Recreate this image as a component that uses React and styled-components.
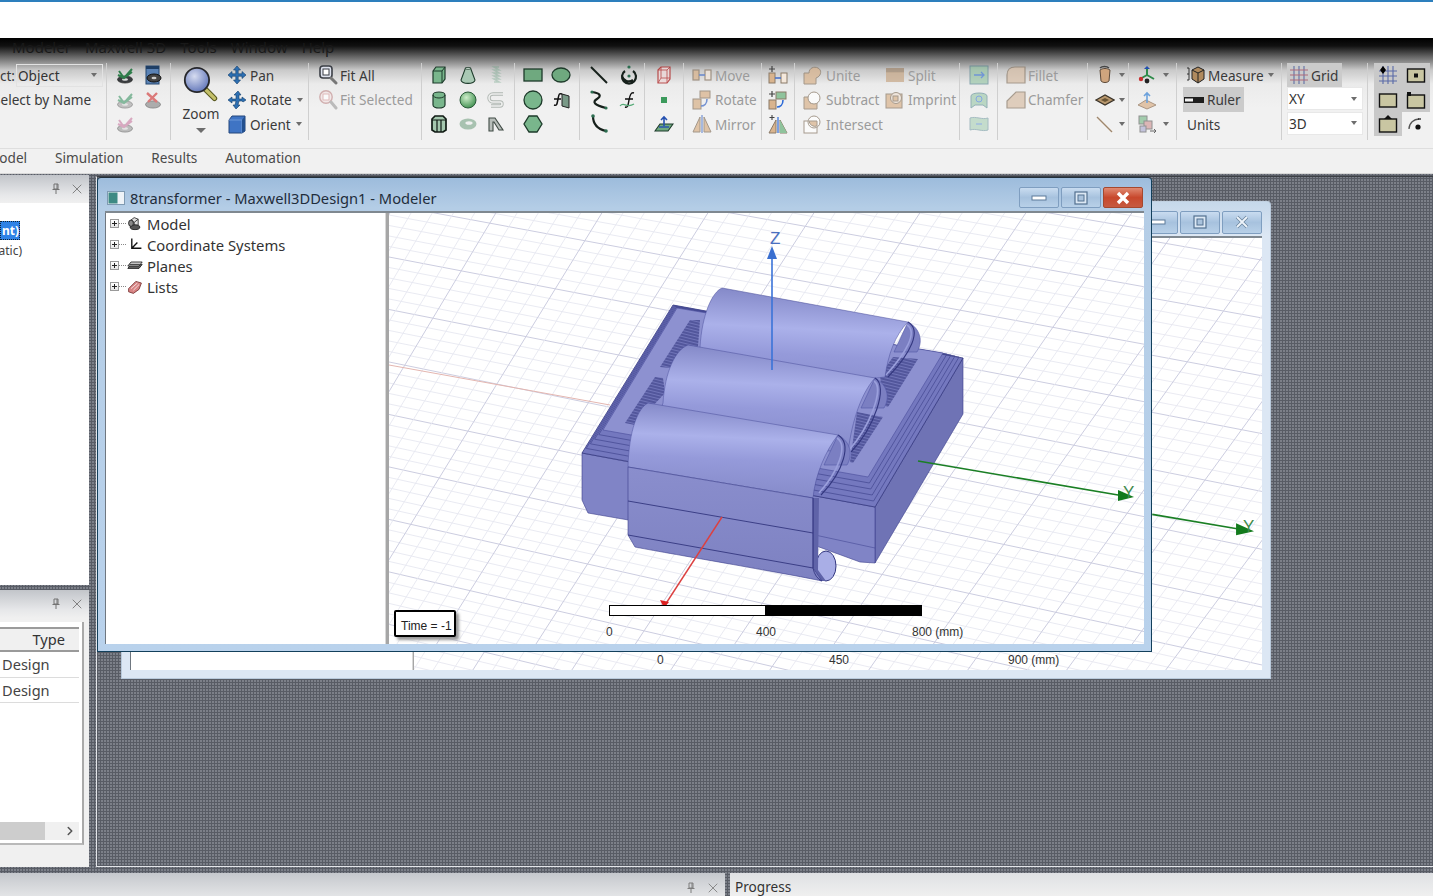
import React, { useMemo } from "react";
import styled, { createGlobalStyle, css } from "styled-components";
import { X, ChevronRight } from "lucide-react";

const GlobalStyle = createGlobalStyle`
  html, body { margin: 0; padding: 0; background: #fff; }
  body { font-family: "Noto Sans", "Liberation Sans", sans-serif; color: #333; }
  * { box-sizing: border-box; }
`;

const dither = css`
  background-color: #7c8089;
  background-image: radial-gradient(#585c65 48%, transparent 52%);
  background-size: 3px 3px;
`;

const Page = styled.div`
  width: 1433px;
  height: 896px;
  display: flex;
  flex-direction: column;
  overflow: hidden;
`;

const TopStrip = styled.div`
  height: 38px;
  flex: none;
  background: #fff;
  border-top: 2px solid #2d7fbd;
`;

const Ribbon = styled.div`
  height: 111px;
  flex: none;
  background: linear-gradient(#000 0, #111 8px, #6f6f6f 20px, #c9c9c9 32px, #ebebeb 46px, #f1f1f1 70px);
  border-bottom: 1px solid #dedede;
`;

const MenuBar = styled.div`
  height: 24.75px;
  display: flex;
  gap: 14px;
  padding: 0 0 0 12px;
  font-size: 15px;
  line-height: 18px;
  color: #191919;
`;

const Band = styled.div`
  display: flex;
  height: 80px;
  overflow: hidden;
`;

const Group = styled.div`
  flex: none;
  width: ${(p) => p.$w}px;
  height: 77px;
  padding-left: ${(p) => p.$pl || 0}px;
  border-right: ${(p) => (p.$end ? "none" : "1px solid #cfcfcf")};
  display: grid;
  grid-auto-flow: column;
  grid-template-rows: repeat(3, 24.5px);
  grid-template-columns: ${(p) => p.$cols || "1fr"};
`;

const Cell = styled.div`
  display: flex;
  align-items: center;
  justify-content: center;
  background: ${(p) => (p.$on ? "#c9c9c9" : "transparent")};
`;

const Item = styled.div`
  display: flex;
  align-items: center;
  gap: ${(p) => p.$gap ?? 3}px;
  font-size: 13.6px;
  white-space: nowrap;
  color: ${(p) => (p.$off ? "#9b9b9b" : "#3a3a3a")};
  margin-left: ${(p) => p.$ml || 0}px;
  margin-right: ${(p) => p.$mr || 0}px;
  padding: 0 ${(p) => p.$pad || 0}px;
  background: ${(p) => (p.$on ? "#cbcbcb" : "transparent")};
`;

const ClipRow = styled.div`
  display: flex;
  align-items: center;
  justify-content: flex-end;
  font-size: 13.6px;
  color: #3a3a3a;
  padding-right: 3px;
  gap: 1px;
  white-space: nowrap;
`;

const Combo = styled.div`
  width: ${(p) => p.$w}px;
  height: 23px;
  flex: none;
  display: flex;
  align-items: center;
  justify-content: space-between;
  padding: 0 3px 0 1px;
  font-size: 13.6px;
  color: #333;
  background: ${(p) => p.$bg || "#fff"};
  border: 1px solid ${(p) => p.$line || "#e8e8e8"};
`;

const Caret = styled.span`
  flex: none;
  width: 0;
  height: 0;
  margin: 0 ${(p) => p.$m ?? 2}px;
  border-left: ${(p) => p.$big || 3.5}px solid transparent;
  border-right: ${(p) => p.$big || 3.5}px solid transparent;
  border-top: ${(p) => (p.$big ? 5 : 4)}px solid #6d6d6d;
`;

const ZoomCol = styled.div`
  grid-row: 1 / span 3;
  display: flex;
  flex-direction: column;
  align-items: center;
  font-size: 13.6px;
  color: #3a3a3a;
  padding-top: 3px;
`;

const ZoomLabel = styled.div`
  line-height: 18px;
  margin: 3px 0 5px;
`;

const TabBar = styled.div`
  height: 24px;
  flex: none;
  background: #f1f1f1;
  display: flex;
  gap: 28px;
  margin-left: -13px;
  font-size: 13.6px;
  line-height: 18px;
  color: #4a4a4a;
`;

const Workspace = styled.div`
  ${dither}
  height: 700px;
  flex: none;
  display: flex;
  border-top: 1px solid #d8d8d8;
`;

const LeftCol = styled.div`
  width: 89px;
  flex: none;
  display: flex;
  flex-direction: column;
  gap: 5px;
  padding-top: 1px;
  height: 695px;
`;

const Pane = styled.div`
  display: flex;
  flex-direction: column;
  height: ${(p) => p.$h}px;
  flex: none;
  background: ${(p) => p.$bg};
`;

const PaneHead = styled.div`
  height: ${(p) => p.$h}px;
  flex: none;
  display: flex;
  align-items: center;
  justify-content: flex-end;
  gap: 7px;
  padding-right: 4px;
  color: #737373;
  background: linear-gradient(#c2c5ca, #e6e7e9 70%, #f0f0f0);
`;

const TreeClip = styled.div`
  padding-top: 18px;
  display: flex;
  flex-direction: column;
  gap: 1px;
  font-size: 12px;
  line-height: 18px;
`;

const SelLabel = styled.div`
  width: 20px;
  height: 19px;
  display: flex;
  justify-content: flex-end;
  align-items: center;
  background: #2f82e6;
  border: 1px dotted #123;
  color: #fff;
  font-weight: 700;
`;

const ClipText = styled.div`
  width: 22px;
  display: flex;
  justify-content: flex-end;
  white-space: nowrap;
  color: #444;
  margin-top: 1px;
`;

const ListBox = styled.div`
  margin: 4px 5px 0 0;
  height: 223px;
  background: #fff;
  border-right: 2px solid #a9a9a9;
  border-bottom: 2px solid #b9b9b9;
  padding: 5px 3px 0 0;
  display: flex;
  flex-direction: column;
  font-size: 14.6px;
  color: #444;
`;

const TypeHead = styled.div`
  height: 25px;
  flex: none;
  background: #f0f0f0;
  border-top: 2px solid #9a9a9a;
  border-bottom: 2px solid #9a9a9a;
  text-align: right;
  padding-right: 14px;
  line-height: 21px;
  color: #333;
`;

const TypeRow = styled.div`
  height: 25.5px;
  flex: none;
  border-bottom: 1px solid #dcdcdc;
  padding-left: 2px;
  line-height: 24px;
`;

const HScroll = styled.div`
  margin-top: auto;
  margin-bottom: 3px;
  height: 18px;
  flex: none;
  display: flex;
  justify-content: flex-end;
  align-items: center;
  color: #555;
  background: linear-gradient(to right, #cdcdcd 45px, #f0f0f0 45px);
  padding-right: 2px;
`;

const Mdi = styled.div`
  flex: 1;
  position: relative;
  margin: 2px 0 6px 7px;
  height: 691px;
  border-top: 1px solid #3c3f45;
  border-left: 1px solid #e4e6ea;
  border-bottom: 1px solid #e4e6ea;
  overflow: hidden;
`;

const Win = styled.div`
  position: absolute;
  left: ${(p) => p.$x}px;
  top: ${(p) => p.$y}px;
  width: ${(p) => p.$w}px;
  height: ${(p) => p.$h}px;
  display: flex;
  flex-direction: column;
  padding: 0 ${(p) => p.$pad}px ${(p) => p.$pad}px;
  border-radius: 4px 4px 0 0;
  background: ${(p) =>
    p.$active
      ? "linear-gradient(#9dbcdc 0, #b4cde6 30px, #b9d2ec 100%)"
      : "linear-gradient(#c6d8ea 0, #dce7f4 34px, #dce7f4 100%)"};
  border: 1px solid ${(p) => (p.$active ? "#13405c" : "#b9cadc")};
  border-top-color: ${(p) => (p.$active ? "#22303c" : "#c2d2e2")};
`;

const TitleBar = styled.div`
  height: ${(p) => p.$h}px;
  flex: none;
  display: flex;
  align-items: center;
  margin: 0 -6px 0 ${(p) => p.$ml || 0}px;
  padding-top: 6px;
`;

const TitleText = styled.div`
  flex: 1;
  margin-left: 5px;
  font-size: 14.7px;
  color: #1f2d3b;
  white-space: nowrap;
`;

const WinButtons = styled.div`
  display: flex;
  gap: 2px;
  padding-right: ${(p) => p.$pr}px;
`;

const WinBtn = styled.div`
  width: 40px;
  height: ${(p) => p.$h || 21}px;
  display: flex;
  align-items: center;
  justify-content: center;
  border-radius: 2px;
  border: 1px solid ${(p) => (p.$close ? "#a5482e" : "#7f9ec0")};
  background: ${(p) =>
    p.$close
      ? "linear-gradient(#e08a72, #c8482c 50%, #c65a40)"
      : "linear-gradient(#c9dcf0, #a7c2de 50%, #b8d0e8)"};
`;

const WinBody = styled.div`
  flex: 1;
  min-height: 0;
  display: flex;
  background: #fff;
  border-top: 2px solid #7f8890;
`;

const TreePane = styled.div`
  width: ${(p) => p.$w}px;
  flex: none;
  border-left: 1px solid #6f7780;
  padding: 0 0 0 4px;
  display: flex;
  flex-direction: column;
  font-size: 14.8px;
  color: #333;
`;

const TreeRow = styled.div`
  height: 21px;
  display: flex;
  align-items: center;
  white-space: nowrap;
`;

const Expander = styled.span`
  width: 9px;
  height: 9px;
  flex: none;
  position: relative;
  border: 1px solid #9a9a9a;
  background: linear-gradient(to bottom, #fff, #e6e6e6);
  &::before {
    content: "";
    position: absolute;
    left: 1px;
    top: 3px;
    width: 5px;
    height: 1px;
    background: #222;
  }
  &::after {
    content: "";
    position: absolute;
    left: 3px;
    top: 1px;
    width: 1px;
    height: 5px;
    background: #222;
  }
`;

const Dots = styled.span`
  width: 7px;
  flex: none;
  border-top: 1px dotted #888;
  margin-right: 1px;
`;

const TreeLabel = styled.span`
  margin-left: 4px;
`;

const SplitBar = styled.div`
  width: ${(p) => p.$w}px;
  flex: none;
  background: #a6a6a6;
  border-left: 1px solid #d8d8d8;
`;

const Viewport = styled.div`
  flex: 1;
  position: relative;
  min-width: 0;
  background: #fff;
`;

const Scene = styled.svg`
  position: absolute;
  inset: 0;
  width: 100%;
  height: 100%;
  display: block;
`;

const TimeBox = styled.div`
  position: absolute;
  left: 5px;
  bottom: 7px;
  width: 62px;
  height: 27px;
  background: #fff;
  border: 2px solid #000;
  border-radius: 2px;
  box-shadow: 3px 3px 3px #999;
  font-family: "Liberation Sans", sans-serif;
  font-size: 12px;
  line-height: 29px;
  padding-left: 5px;
  color: #222;
  white-space: nowrap;
`;

const ScaleBar = styled.div`
  position: absolute;
  left: 220px;
  top: 392px;
  width: 313px;
  height: 11px;
  display: flex;
  border: 1px solid #000;
  background: linear-gradient(to right, #fff 50%, #000 50%);
`;

const ScaleTick = styled.div`
  position: absolute;
  left: ${(p) => p.$x}px;
  top: ${(p) => p.$y}px;
  font-family: "Liberation Sans", sans-serif;
  font-size: 12px;
  line-height: 13px;
  color: #333;
  white-space: nowrap;
`;

const BottomRow = styled.div`
  ${dither}
  flex: 1;
  display: flex;
  gap: 5px;
`;

const DockLeft = styled.div`
  width: 725px;
  flex: none;
  display: flex;
  justify-content: flex-end;
  align-items: center;
  gap: 8px;
  padding: 6px 4px 0 0;
  color: #7d7d7d;
  background: linear-gradient(#c5c8cd, #e4e5e7);
`;

const DockRight = styled.div`
  flex: 1;
  padding: 4px 0 0 5px;
  font-size: 13.6px;
  line-height: 20px;
  color: #333;
  background: linear-gradient(#dfe1e4, #f0f0f0);
`;

const Svg = styled.svg`
  width: ${(p) => p.$s || 20}px;
  height: ${(p) => p.$s || 20}px;
  flex: none;
  display: block;
  opacity: ${(p) => p.$o ?? 1};
`;

const Ico = ({ s, o, children }) => (
  <Svg viewBox="0 0 20 20" $s={s} $o={o}>
    {children}
  </Svg>
);

const G = "#79b68c";
const D = "#1d3a2a";
const T = "#d9b48e";
const TD = "#8a7a68";

const Pin = () => (
  <Svg viewBox="0 0 12 12" $s={12}>
    <path d="M4 1h4v5H4zM2.5 6.5h7M6 6.5V11M7 1v5" fill="none" stroke="currentColor" strokeWidth="1" />
  </Svg>
);

const Bowl = ({ c = "#3a3d40" }) => <ellipse cx="10" cy="14.5" rx="7.5" ry="3.6" fill={c} stroke="#222" strokeWidth=".6" />;

const CheckEye = ({ c, o }) => (
  <Ico o={o}>
    <Bowl c={o < 1 ? "#9a9a9a" : "#3a3d40"} />
    <ellipse cx="10" cy="14.5" rx="3" ry="1.3" fill="#ddd" />
    <path d="M4 6l5 7 8-9M3 10l6 3 8-6" fill="none" stroke={c} strokeWidth="2" />
  </Ico>
);

const I = {
  docEye: (
    <Ico>
      <rect x="3" y="1" width="13" height="18" fill="#5a82b5" stroke="#24476f" />
      <rect x="3" y="1" width="13" height="3" fill="#1f3f66" />
      <ellipse cx="11" cy="13" rx="7" ry="4" fill="#444" stroke="#111" />
      <ellipse cx="11" cy="13" rx="2.5" ry="1.3" fill="#ccc" />
    </Ico>
  ),
  redEye: (
    <Ico o={0.65}>
      <Bowl c="#888" />
      <path d="M4 3l10 9M14 3L5 12" stroke="#d23c3c" strokeWidth="2.4" />
    </Ico>
  ),
  lens: (
    <Svg viewBox="0 0 40 40" $s={36}>
      <defs>
        <radialGradient id="lensG" cx=".4" cy=".35" r=".7">
          <stop offset="0" stopColor="#d6dcf0" />
          <stop offset="1" stopColor="#5f74b8" />
        </radialGradient>
      </defs>
      <path d="M24 25l11 11" stroke="#5a5a20" strokeWidth="6" strokeLinecap="round" />
      <path d="M24 25l11 11" stroke="#c4c06a" strokeWidth="3.6" strokeLinecap="round" />
      <circle cx="15.5" cy="15.5" r="13.5" fill="url(#lensG)" stroke="#26272b" strokeWidth="2" />
    </Svg>
  ),
  pan: (
    <Ico>
      <path d="M10 1l3.5 4H11.2v3.8H15V6.5l4 3.5-4 3.5v-2.3h-3.8V15h2.3L10 19l-3.5-4h2.3v-3.8H5v2.3L1 10l4-3.5v2.3h3.8V5H6.5z" fill="#2d6fb2" stroke="#123d6a" strokeWidth=".6" />
    </Ico>
  ),
  rotate: (
    <Ico>
      <path d="M1 10l4-3v2h4V5H7l4-4 3 4h-2v4h3V7l4 3-3 2-1-1h-3l-1 4h2l-4 4-3-4h2l1-4H5v2z" fill="#2d6fb2" stroke="#123d6a" strokeWidth=".6" />
    </Ico>
  ),
  cube: (
    <Ico>
      <path d="M2 6l3-4h13v15l-3 2H2z" fill="#3f74c4" stroke="#25467a" />
      <path d="M2 6h13v13" fill="none" stroke="#6d98d8" />
      <path d="M15 6l3-4v15l-3 2z" fill="#23508f" />
    </Ico>
  ),
  fitAll: (
    <Ico>
      <rect x="2" y="1" width="12" height="12" rx="3" fill="#dfe3ee" stroke="#3b3f46" strokeWidth="1.6" />
      <rect x="5" y="4" width="6" height="6" fill="#fff" stroke="#3b3f46" />
      <path d="M13 13l5 5" stroke="#777" strokeWidth="3" strokeLinecap="round" />
    </Ico>
  ),
  fitSel: (
    <Ico o={0.75}>
      <circle cx="8" cy="7" r="6.2" fill="#f3e6e6" stroke="#c79a9a" strokeWidth="1.4" />
      <rect x="5" y="4" width="6" height="6" fill="#fff" stroke="#dba9a9" />
      <path d="M13 12l5 6" stroke="#aaa" strokeWidth="3" strokeLinecap="round" />
    </Ico>
  ),
  box: (
    <Ico>
      <path d="M4 6l3-4h9v12l-3 4H4z" fill={G} stroke={D} strokeWidth="1.2" />
      <path d="M4 6h9v12M13 6l3-4" fill="none" stroke={D} />
    </Ico>
  ),
  cone: (
    <Ico>
      <path d="M7.5 3h5l4.5 12a7 3.4 0 0 1-14 0z" fill="#a9c9b4" stroke={D} strokeWidth="1.1" />
      <ellipse cx="10" cy="3.4" rx="2.5" ry="1" fill="#cfe0d5" stroke={D} strokeWidth=".7" />
    </Ico>
  ),
  helix: (
    <Ico o={0.32}>
      <path d="M13 2H8l5 3H8l5 3H8l5 3H8l5 3H8l5 3H8" fill="none" stroke="#5c9a78" strokeWidth="1.5" />
    </Ico>
  ),
  cyl: (
    <Ico>
      <path d="M4 5a6 3 0 0 1 12 0v10a6 3 0 0 1-12 0z" fill={G} stroke={D} strokeWidth="1.2" />
      <path d="M4 5a6 3 0 0 0 12 0" fill="none" stroke={D} />
    </Ico>
  ),
  sphere: (
    <Ico>
      <defs>
        <radialGradient id="sphG" cx=".4" cy=".35" r=".7">
          <stop offset="0" stopColor="#cfeecb" />
          <stop offset="1" stopColor="#3e8f4e" />
        </radialGradient>
      </defs>
      <circle cx="10" cy="10" r="8" fill="url(#sphG)" stroke="#2b5a3a" />
    </Ico>
  ),
  hook: (
    <Ico o={0.55}>
      <path d="M17 4H7a4 4 0 0 0 0 8h7a2 2 0 0 1 0 4H5" fill="none" stroke="#7e8a82" strokeWidth="3.4" />
      <path d="M17 4H7a4 4 0 0 0 0 8h7a2 2 0 0 1 0 4H5" fill="none" stroke="#eef0ee" strokeWidth="1.6" />
    </Ico>
  ),
  poly: (
    <Ico>
      <path d="M3 5l3-3h8l3 3v11l-3 2H6l-3-2z" fill="#a5c8af" stroke="#101a14" strokeWidth="1.7" />
      <path d="M3 6h14M8 6v12M12 6v12" fill="none" stroke="#101a14" strokeWidth="1.2" />
    </Ico>
  ),
  torus: (
    <Ico>
      <ellipse cx="10" cy="10" rx="8.5" ry="5.5" fill="#a8c2b0" />
      <ellipse cx="11" cy="9" rx="3.6" ry="1.8" fill="#f0f0f0" />
    </Ico>
  ),
  bond: (
    <Ico>
      <path d="M3 17V4h6l8 12h-4L8 8H7v9z" fill="#b8beba" stroke="#3f4a44" strokeWidth="1.1" />
    </Ico>
  ),
  rect: (
    <Ico>
      <rect x="1" y="4" width="18" height="12" fill="#6fa97f" stroke={D} strokeWidth="1.3" />
    </Ico>
  ),
  ellipse: (
    <Ico>
      <ellipse cx="10" cy="10" rx="9" ry="7" fill="#6fa97f" stroke={D} strokeWidth="1.3" />
    </Ico>
  ),
  circle: (
    <Ico>
      <circle cx="10" cy="10" r="9" fill={G} stroke={D} strokeWidth="1.3" />
    </Ico>
  ),
  eqSurf: (
    <Ico>
      <path d="M11 4l7 2v12l-7-2z" fill="#7a9a88" stroke="#222" />
      <path d="M3 15c3 1 3-1 4-6s1-6 4-5M3 9h7" fill="none" stroke="#111" strokeWidth="1.5" />
    </Ico>
  ),
  hex: (
    <Ico>
      <path d="M6 2h8l5 8-5 8H6l-5-8z" fill={G} stroke={D} strokeWidth="1.3" />
    </Ico>
  ),
  line: (
    <Ico>
      <path d="M2 2l16 16" stroke="#16201b" strokeWidth="2" />
    </Ico>
  ),
  arcC: (
    <Ico>
      <path d="M15 6a7 7 0 1 1-8 0M4 11a7 7 0 0 0 11 4" fill="none" stroke="#16201b" strokeWidth="2.2" />
      <circle cx="11" cy="2" r="1.6" fill="#2c6d50" />
      <circle cx="11" cy="11" r="1.6" fill="#2c6d50" />
    </Ico>
  ),
  spline: (
    <Ico>
      <path d="M3 2c8 1 10 4 5 7s-3 6 9 9" fill="none" stroke="#16201b" strokeWidth="2.2" />
      <circle cx="3" cy="2" r="1.6" fill="#2c6d50" />
      <circle cx="17" cy="18" r="1.6" fill="#2c6d50" />
    </Ico>
  ),
  eqCurve: (
    <Ico>
      <path d="M7 17c3 1 3-2 4-7s2-8 5-7M7 9h8" fill="none" stroke="#111" strokeWidth="1.4" />
      <path d="M2 16c4-5 6 3 14-2" fill="none" stroke="#5a7" strokeWidth="1.2" />
    </Ico>
  ),
  arc: (
    <Ico>
      <path d="M4 2c0 8 4 13 13 15" fill="none" stroke="#16201b" strokeWidth="2.2" />
      <circle cx="4" cy="2" r="1.8" fill="#2c6d50" />
      <circle cx="17" cy="17" r="1.8" fill="#2c6d50" />
    </Ico>
  ),
  redBox: (
    <Ico o={0.8}>
      <path d="M4 5l3-3h9v12l-3 4H4z" fill="#eed9d9" stroke="#b02a2a" strokeWidth="1.2" />
      <path d="M4 5h9v13M13 5l3-3M7 2v11h9M7 13l-3 5" fill="none" stroke="#b02a2a" strokeWidth=".8" />
    </Ico>
  ),
  point: (
    <Ico>
      <rect x="7" y="7" width="6" height="6" fill="#3c9a5c" />
    </Ico>
  ),
  plane: (
    <Ico>
      <path d="M1 17l5-7h13l-5 7z" fill="#6fa97f" stroke={D} strokeWidth="1.1" />
      <path d="M10 12V3M7 6l3-3 3 3" fill="none" stroke="#2450b0" strokeWidth="1.6" />
      <path d="M5 13h10" stroke="#2450b0" strokeWidth="1.4" />
    </Ico>
  ),
  move: (
    <Ico o={0.75}>
      <rect x="1" y="5" width="6" height="10" fill={T} stroke={TD} strokeWidth="1.2" />
      <rect x="13" y="5" width="6" height="10" fill="#f4e8dc" stroke={TD} strokeWidth="1.2" />
      <path d="M7 10h6" stroke="#4c74c8" strokeWidth="1.6" />
    </Ico>
  ),
  rotOp: (
    <Ico o={0.75}>
      <rect x="1" y="9" width="8" height="10" fill={T} stroke={TD} />
      <rect x="8" y="1" width="10" height="7" fill={T} stroke={TD} />
      <path d="M15 9c0 5-3 7-6 7" fill="none" stroke="#4c74c8" strokeWidth="1.6" />
    </Ico>
  ),
  mirror: (
    <Ico o={0.75}>
      <path d="M8 3v15H1zM12 3v15h7z" fill={T} stroke={TD} />
      <path d="M10 1v18" stroke="#4c74c8" strokeWidth="1.2" />
    </Ico>
  ),
  plusMove: (
    <Ico>
      <rect x="1" y="8" width="6" height="10" fill={T} stroke={TD} />
      <rect x="13" y="8" width="6" height="10" fill="#f4e8dc" stroke={TD} />
      <path d="M7 13h6" stroke="#4c74c8" strokeWidth="1.6" />
      <path d="M4 1v6M1 4h6" stroke="#444" strokeWidth="1.2" />
    </Ico>
  ),
  plusRot: (
    <Ico>
      <rect x="1" y="10" width="7" height="9" fill={T} stroke={TD} />
      <rect x="8" y="2" width="10" height="7" fill="#8fc39c" stroke={TD} />
      <path d="M15 10c0 5-3 7-6 7" fill="none" stroke="#2e6bd8" strokeWidth="1.6" />
      <path d="M4 1v6M1 4h6" stroke="#444" strokeWidth="1.2" />
    </Ico>
  ),
  plusMirror: (
    <Ico>
      <path d="M8 6v13H1zM12 6v13h7z" fill={T} stroke={TD} />
      <path d="M12 6v13h7z" fill="#8fc39c" />
      <path d="M10 3v16" stroke="#2e6bd8" strokeWidth="1.2" />
      <path d="M4 1v5M1.5 3.5h5" stroke="#444" strokeWidth="1.1" />
    </Ico>
  ),
  unite: (
    <Ico o={0.72}>
      <path d="M1 8h5c0-5 5-7 9-5s3 7 0 9l-2 1v6H1z" fill={T} stroke={TD} />
    </Ico>
  ),
  subtract: (
    <Ico o={0.72}>
      <path d="M1 7h6v6h7v6H1z" fill={T} stroke={TD} />
      <circle cx="11" cy="8" r="6" fill="#fff" stroke={TD} />
    </Ico>
  ),
  intersect: (
    <Ico o={0.72}>
      <rect x="1" y="7" width="13" height="12" fill="#fff" stroke={TD} />
      <circle cx="11" cy="8" r="6" fill="#fff" stroke={TD} />
      <path d="M6 7h8v5a6 6 0 0 1-8-5z" fill={T} stroke={TD} />
    </Ico>
  ),
  split: (
    <Ico o={0.72}>
      <rect x="1" y="3" width="18" height="14" fill="#a0886f" />
      <path d="M1 8h18" stroke="#d9b48e" />
      <rect x="1" y="8" width="18" height="9" fill="#c8a989" />
    </Ico>
  ),
  imprint: (
    <Ico o={0.72}>
      <rect x="1" y="4" width="16" height="14" fill={T} stroke={TD} />
      <circle cx="11" cy="8" r="5.5" fill="#f1e3d6" stroke={TD} />
      <rect x="8" y="6" width="5" height="5" fill={T} stroke={TD} />
    </Ico>
  ),
  sweep: (
    <Ico o={0.6}>
      <rect x="1" y="1" width="18" height="18" fill="#8fc3a0" stroke="#4a7d8a" />
      <path d="M5 10h10M12 7l3 3-3 3" fill="none" stroke="#2e6bd8" strokeWidth="1.3" />
    </Ico>
  ),
  thicken: (
    <Ico o={0.55}>
      <path d="M2 18V6c0-4 16-4 16 0v12l-4-3H6z" fill="#8fc3a0" stroke="#4a7d8a" />
      <circle cx="10" cy="9" r="3" fill="none" stroke="#2e6bd8" />
    </Ico>
  ),
  wrap: (
    <Ico o={0.45}>
      <path d="M1 4c6-2 12 2 18 0v12c-6 2-12-2-18 0z" fill="#8fc3a0" stroke="#4a7d8a" />
      <path d="M7 10h6" stroke="#2e6bd8" strokeWidth="1.2" />
    </Ico>
  ),
  fillet: (
    <Ico o={0.7}>
      <path d="M1 18V10c0-5 3-8 8-8h10v16z" fill="#d8bfa7" stroke={TD} strokeWidth="1.2" />
    </Ico>
  ),
  chamfer: (
    <Ico o={0.7}>
      <path d="M1 18V11L10 2h9v16z" fill="#d8bfa7" stroke={TD} strokeWidth="1.2" />
    </Ico>
  ),
  barrel: (
    <Ico>
      <path d="M5 5c3-2 7-2 10 0l-1 11c-2 2-6 2-8 0z" fill="#cfa57e" stroke="#5c4a3a" />
      <path d="M5 3c2-2 7-2 9 0" fill="none" stroke="#444" strokeWidth="1.3" />
    </Ico>
  ),
  disk: (
    <Ico>
      <path d="M1 10l9-5 9 5-9 5z" fill="#b9986e" stroke="#3a3328" strokeWidth="1.2" />
      <path d="M6 10l4-2 4 2-4 2z" fill="#6a5433" />
    </Ico>
  ),
  slash: (
    <Ico>
      <path d="M2 3l15 15" stroke="#b89a7a" strokeWidth="1.6" />
      <path d="M2 3l15 15" stroke="#6a6a6a" strokeWidth=".4" />
    </Ico>
  ),
  axes: (
    <Ico>
      <path d="M10 10V3M10 10l-7 4M10 10l7 4" stroke="#2e8b4a" strokeWidth="2" />
      <path d="M7 4l3-3 3 3" fill="#2450b0" />
      <circle cx="4" cy="14" r="2.2" fill="#c83030" />
      <circle cx="10" cy="16" r="2.4" fill="#222" />
    </Ico>
  ),
  lift: (
    <Ico o={0.8}>
      <path d="M1 15l8-5 10 5-9 4z" fill="#ddb896" stroke="#9a8068" />
      <path d="M10 13V3M7 6l3-3 3 3" fill="none" stroke="#4c8fd8" strokeWidth="1.6" />
    </Ico>
  ),
  blocks: (
    <Ico o={0.8}>
      <rect x="2" y="2" width="8" height="8" fill="#8fc39c" stroke="#7a7a7a" />
      <rect x="7" y="7" width="8" height="8" fill="#d8a8a8" stroke="#7a7a7a" />
      <rect x="3" y="12" width="6" height="6" fill="#b8b8d8" stroke="#7a7a7a" />
      <path d="M13 17h6M17 15l2 2-2 2" stroke="#444" fill="none" />
    </Ico>
  ),
  measure: (
    <Ico>
      <path d="M6 5l6-3 6 3v9l-6 4-6-4z" fill="#b08a5e" stroke="#222" />
      <path d="M6 5l6 3 6-3M12 8v10" fill="none" stroke="#222" />
      <path d="M3 3v12M1 3h2M1 9h2M1 15h2" stroke="#222" strokeWidth=".9" />
    </Ico>
  ),
  ruler: (
    <Svg viewBox="0 0 20 10" $s={20}>
      <rect x="0" y="2" width="20" height="6" fill="#1d1d1d" />
      <rect x="1" y="3.5" width="8" height="3" fill="#f0f0f0" />
    </Svg>
  ),
  grid: (
    <Ico>
      <path d="M5 1v18M10 1v18M15 1v18" stroke="#6a78a8" strokeWidth="1.2" />
      <path d="M1 5h18M1 10h18M1 15h18" stroke="#b06a7a" strokeWidth="1.2" />
    </Ico>
  ),
  snapGrid: (
    <Ico>
      <path d="M5 1v18M10 1v18M15 1v18M1 6h18M1 11h18M1 16h18" stroke="#5a6aa8" strokeWidth="1.1" />
      <path d="M5 1l3 4-3 4-3-4z" fill="#000" />
    </Ico>
  ),
  snapCenter: (
    <Ico>
      <rect x="1.5" y="4" width="17" height="13" fill="#c9c6a2" stroke="#111" strokeWidth="1.4" />
      <rect x="8" y="8.5" width="4" height="4" fill="#111" />
    </Ico>
  ),
  snapEdge: (
    <Ico>
      <rect x="1.5" y="4" width="17" height="13" fill="#c9c6a2" stroke="#111" strokeWidth="1.4" />
    </Ico>
  ),
  snapCorner: (
    <Ico>
      <rect x="1.5" y="5" width="17" height="13" fill="#c9c6a2" stroke="#111" strokeWidth="1.4" />
      <rect x="1" y="2" width="4" height="4" fill="#111" />
    </Ico>
  ),
  snapMid: (
    <Ico>
      <rect x="1.5" y="5" width="17" height="13" fill="#c9c6a2" stroke="#111" strokeWidth="1.4" />
      <path d="M10 1l4 4h-8z" fill="#111" />
    </Ico>
  ),
  snapArc: (
    <Ico>
      <path d="M3 15c0-6 5-10 10-10" fill="none" stroke="#555" strokeWidth="1.3" />
      <circle cx="12" cy="13" r="2.6" fill="#111" />
      <path d="M12 5l3 0" stroke="#111" strokeWidth="1.2" />
    </Ico>
  ),
  winIcon: (
    <Svg viewBox="0 0 18 14" $s={18}>
      <rect x=".5" y=".5" width="17" height="13" fill="#eef3f8" stroke="#7f9ab2" />
      <rect x="1.5" y="1.5" width="9" height="11" fill="#3d8a84" />
    </Svg>
  ),
  model: (
    <Ico s={16}>
      <path d="M5 5l4-3 5 2v7l-5 4-4-3z" fill="#ddd" stroke="#222" />
      <path d="M5 5l4 3 5-4M9 8v7" fill="none" stroke="#222" />
      <ellipse cx="10" cy="14" rx="6" ry="3" fill="#555" stroke="#111" />
      <ellipse cx="5" cy="9" rx="3" ry="4" fill="#888" stroke="#111" />
    </Ico>
  ),
  coord: (
    <Ico s={16}>
      <path d="M6 2v12h12M6 14l7-7" fill="none" stroke="#111" strokeWidth="1.7" />
    </Ico>
  ),
  planes: (
    <Ico s={16}>
      <path d="M1 13l4-5h14l-4 5z" fill="#666" stroke="#111" />
      <path d="M1 10l4-5h14l-4 5z" fill="#d8d8d8" stroke="#111" />
      <path d="M3 8h13" stroke="#111" />
    </Ico>
  ),
  lists: (
    <Ico s={16}>
      <path d="M2 12l9-9 7 2-3 8-7 5-6-2z" fill="#d88484" stroke="#6e2a2a" />
      <path d="M5 12l8-7M8 14l7-7" stroke="#fff" strokeWidth=".9" />
    </Ico>
  ),
};

const gridLines = (x0, y0, w, h, ox, oy) => {
  const out = [];
  for (let i = -50; i < 70; i++) {
    const Y = oy + i * 11;
    const s = 0.2 + (Y - 400) * 0.00012;
    out.push({ key: "a" + i, major: i % 5 === 0, x1: x0, y1: Y + s * (x0 - ox), x2: x0 + w, y2: Y + s * (x0 + w - ox) });
  }
  for (let i = -60; i < 80; i++) {
    const X = ox + i * 20.5;
    const s = -0.66 - (X - 770) * 0.00015;
    out.push({ key: "b" + i, major: i % 5 === 0, x1: X + s * (y0 - oy), y1: y0, x2: X + s * (y0 + h - oy), y2: y0 + h });
  }
  return out;
};

const PlaneGrid = ({ x, y, w, h, ox, oy }) => {
  const lines = useMemo(() => gridLines(x, y, w, h, ox, oy), [x, y, w, h, ox, oy]);
  return lines.map(({ key, major, ...l }) => (
    <line key={key} {...l} stroke={major ? "#cccde0" : "#e7e8f0"} strokeWidth={major ? 1 : 0.9} />
  ));
};

const lerpPoly = (a, b, t) =>
  a.map((p, i) => [p[0] + (b[i][0] - p[0]) * t, p[1] + (b[i][1] - p[1]) * t].join(",")).join(" ");

const OUTER = [[582, 453], [875, 507], [963, 358], [673, 305]];
const INNER = [[603, 430], [868, 477], [943, 353], [677, 308]];

// open end of a coil: the arch of the winding and its dark inside
const CoilEnd = ({ tx, ty, bx, by }) => (
  <g>
    <path
      d={`M${tx},${ty}C${tx + 13},${ty + 7} ${tx + 15},${ty + 20} ${tx + 9},${ty + 30}L${tx - 14},${ty + 30}z`}
      fill="#7b7fc2"
      stroke="#5357a6"
      strokeWidth=".6"
    />
    <path
      d={`M${tx},${ty}C${tx + 14},${ty + 8} ${bx + 26},${by - 24} ${bx + 3},${by}`}
      fill="none"
      stroke="#33377f"
      strokeWidth="1.1"
    />
    <path
      d={`M${tx - 1},${ty + 3}C${tx + 10},${ty + 10} ${bx + 21},${by - 24} ${bx + 1},${by - 2}`}
      fill="none"
      stroke="#9a9fdc"
      strokeWidth="1.6"
    />
  </g>
);

const Transformer = () => (
  <g>
    <defs>
      <linearGradient id="coilG" x1="0.1" y1="0" x2="0" y2="1">
        <stop offset="0" stopColor="#858ac9" />
        <stop offset=".32" stopColor="#abb1ea" />
        <stop offset=".55" stopColor="#959ada" />
        <stop offset="1" stopColor="#8388c6" />
      </linearGradient>
      <linearGradient id="frontG" x1="0" y1="0" x2="0" y2="1">
        <stop offset="0" stopColor="#8a8ecd" />
        <stop offset="1" stopColor="#7d81c1" />
      </linearGradient>
      <pattern id="hatchG" width="4" height="3" patternUnits="userSpaceOnUse" patternTransform="rotate(14)">
        <rect width="4" height="3" fill="#7074b8" />
        <path d="M0 1h4" stroke="#34387f" strokeWidth="1" />
      </pattern>
    </defs>
    <path d="M875,507 963,358 963,414 875,563z" fill="#6f73b5" stroke="#3a3e8c" strokeWidth=".6" />
    <path d="M582,453 640,464 640,522 588,513 582,500z" fill="#8084c6" stroke="#3a3e8c" strokeWidth=".6" />
    <path d="M800,493 875,507 875,563 860,562 800,540z" fill="#8084c6" stroke="#3a3e8c" strokeWidth=".6" />
    <path d="M815,535 875,548" stroke="#3a3e8c" strokeWidth=".5" />
    <polygon points={lerpPoly(OUTER, INNER, 0)} fill="#7478bf" stroke="#33377f" strokeWidth=".8" />
    {[0.2, 0.4, 0.6, 0.8].map((t) => (
      <polygon key={t} points={lerpPoly(OUTER, INNER, t)} fill="none" stroke="#42468f" strokeWidth=".7" />
    ))}
    <polygon points={lerpPoly(OUTER, INNER, 1)} fill="#8d91d0" stroke="#4a4e9a" strokeWidth=".6" />
    <path d="M690,320 700,320 698,347 670,368 660,367z" fill="url(#hatchG)" />
    <path d="M655,377 663,378 665,393 635,425 625,423z" fill="url(#hatchG)" />
    <path d="M893,357 918,359 888,407 883,405 880,375z" fill="url(#hatchG)" />
    <path d="M857,412 883,417 853,463 850,462z" fill="url(#hatchG)" />

    <CoilEnd tx={908} ty={322} bx={885} by={377} />
    <path d="M700,347C702,315 712,292 722,288L908,322C895,335 888,355 885,377L690,400z" fill="url(#coilG)" stroke="#4a4e9a" strokeWidth=".5" />

    <CoilEnd tx={875} ty={378} bx={848} by={452} />
    <path d="M663,403C665,372 675,350 688,345L875,378C862,392 852,420 848,452L650,440z" fill="url(#coilG)" stroke="#4a4e9a" strokeWidth=".5" />

    <CoilEnd tx={838} ty={435} bx={818} by={495} />
    <ellipse cx="826" cy="566" rx="10" ry="15" fill="#a9aee6" stroke="#33377f" />
    <path d="M813,498 819,498 818,570 826,581 820,581 813,568z" fill="#5f63a8" />
    <path d="M628,467C629,430 638,408 648,403L838,435C826,450 815,475 813,498z" fill="url(#coilG)" stroke="#4a4e9a" strokeWidth=".5" />
    <path d="M628,467 813,498 813,568 822,581 C790,574 660,552 635,547 L628,535z" fill="url(#frontG)" stroke="#3a3e8c" strokeWidth=".6" />
    <path d="M628,501 813,533M628,535 813,568M813,498V568Q815,578 822,581" fill="none" stroke="#33377f" strokeWidth=".9" />
  </g>
);

const Arrow = ({ d, fill }) => <path d={d} fill={fill} />;

const AxisText = styled.text`
  font-family: "Liberation Sans", sans-serif;
  font-size: ${(p) => p.$size}px;
`;

const FrontScene = () => (
  <Scene viewBox="389 213 755 431" preserveAspectRatio="none">
    <PlaneGrid x={389} y={213} w={755} h={431} ox={770} oy={440} />
    <line x1="389" y1="365" x2="610" y2="405" stroke="#e4b6b0" strokeWidth="1" />
    <Transformer />
    <line x1="772" y1="370" x2="772" y2="255" stroke="#3a73d8" strokeWidth="1.6" />
    <Arrow d="M772,246 777,259 767,259z" fill="#3a6fd0" />
    <AxisText x="770" y="244" $size={17} fill="#4a6fc0">Z</AxisText>
    <line x1="722" y1="517" x2="665" y2="605" stroke="#dc4040" strokeWidth="1.4" />
    <Arrow d="M664,608 660,600 669,602z" fill="#dc2020" />
    <line x1="918" y1="461" x2="1124" y2="496" stroke="#1a7f24" strokeWidth="1.6" />
    <Arrow d="M1134,497 1118,490 1118,501z" fill="#127a1c" />
    <AxisText x="1123" y="498" $size={17} fill="#3f8a4a">Y</AxisText>
  </Scene>
);

const BackScene = () => (
  <Scene viewBox="412 237 850 433" preserveAspectRatio="none">
    <PlaneGrid x={412} y={237} w={850} h={433} ox={812} oy={456} />
    <line x1="1152" y1="514" x2="1240" y2="529" stroke="#1a7f24" strokeWidth="1.6" />
    <Arrow d="M1254,531 1236,523 1236,535z" fill="#127a1c" />
    <AxisText x="1243" y="532" $size={17} fill="#3f8a4a">Y</AxisText>
  </Scene>
);

const MinGlyph = ({ c = "#fff" }) => (
  <Svg viewBox="0 0 16 8" $s={16}>
    <rect x="1" y="2" width="14" height="4" fill={c} stroke="#5d7a99" />
  </Svg>
);
const MaxGlyph = () => (
  <Svg viewBox="0 0 14 14" $s={14}>
    <rect x="1" y="1" width="12" height="12" fill="#dce8f4" stroke="#53708f" strokeWidth="1.2" />
    <rect x="4" y="4" width="6" height="6" fill="#a9c2dc" stroke="#53708f" />
  </Svg>
);
const CloseGlyph = ({ c }) => (
  <Svg viewBox="0 0 16 14" $s={16}>
    <path d="M3 2l10 10M13 2L3 12" stroke={c} strokeWidth="3.4" />
    {c !== "#fff" && <path d="M3 2l10 10M13 2L3 12" stroke="#eef4fb" strokeWidth="1.8" />}
  </Svg>
);

const treeItems = [
  ["Model", I.model],
  ["Coordinate Systems", I.coord],
  ["Planes", I.planes],
  ["Lists", I.lists],
];

const Ic3 = ({ list }) =>
  list.map((ic, i) => <Cell key={i}>{ic}</Cell>);

export default function App() {
  return (
    <Page>
      <GlobalStyle />
      <TopStrip />

      <Ribbon>
        <MenuBar>
          <span>Modeler</span>
          <span>Maxwell 3D</span>
          <span>Tools</span>
          <span>Window</span>
          <span>Help</span>
        </MenuBar>
        <Band>
          <Group $w={107} $cols="106px">
            <ClipRow>
              <span>Select:</span>
              <Combo $w={87} $bg="transparent" $line="#e2e2e2">
                Object
                <Caret />
              </Combo>
            </ClipRow>
            <Item $ml={-7}>Select by Name</Item>
          </Group>

          <Group $w={64} $pl={3} $cols="29px 28px">
            <Cell><CheckEye c="#2e7d4a" o={1} /></Cell>
            <Cell><CheckEye c="#2e8d5a" o={0.55} /></Cell>
            <Cell><CheckEye c="#c878a0" o={0.6} /></Cell>
            <Cell>{I.docEye}</Cell>
            <Cell>{I.redEye}</Cell>
            <Cell />
          </Group>

          <Group $w={138} $pl={10} $cols="40px 1fr">
            <ZoomCol>
              {I.lens}
              <ZoomLabel>Zoom</ZoomLabel>
              <Caret $big={5} />
            </ZoomCol>
            <Item $ml={6}>{I.pan}Pan</Item>
            <Item $ml={6}>{I.rotate}Rotate<Caret /></Item>
            <Item $ml={6}>{I.cube}Orient<Caret /></Item>
          </Group>

          <Group $w={113} $pl={9}>
            <Item $gap={2}>{I.fitAll}Fit All</Item>
            <Item $off $gap={2}>{I.fitSel}Fit Selected</Item>
          </Group>

          <Group $w={93} $pl={3} $cols="repeat(3, 28.5px)">
            <Ic3 list={[I.box, I.cyl, I.poly, I.cone, I.sphere, I.torus, I.helix, I.hook, I.bond]} />
          </Group>

          <Group $w={65} $pl={4} $cols="28px 28px">
            <Ic3 list={[I.rect, I.circle, I.hex, I.ellipse, I.eqSurf]} />
          </Group>

          <Group $w={65} $pl={4} $cols="29px 29px">
            <Ic3 list={[I.line, I.spline, I.arc, I.arcC, I.eqCurve]} />
          </Group>

          <Group $w={39}>
            <Ic3 list={[I.redBox, I.point, I.plane]} />
          </Group>

          <Group $w={78} $pl={8}>
            <Item $off>{I.move}Move</Item>
            <Item $off>{I.rotOp}Rotate</Item>
            <Item $off>{I.mirror}Mirror</Item>
          </Group>

          <Group $w={33}>
            <Ic3 list={[I.plusMove, I.plusRot, I.plusMirror]} />
          </Group>

          <Group $w={165} $pl={8} $cols="82px 1fr">
            <Item $off>{I.unite}Unite</Item>
            <Item $off>{I.subtract}Subtract</Item>
            <Item $off>{I.intersect}Intersect</Item>
            <Item $off>{I.split}Split</Item>
            <Item $off>{I.imprint}Imprint</Item>
          </Group>

          <Group $w={38}>
            <Ic3 list={[I.sweep, I.thicken, I.wrap]} />
          </Group>

          <Group $w={90} $pl={8}>
            <Item $off $gap={2}>{I.fillet}Fillet</Item>
            <Item $off $gap={2}>{I.chamfer}Chamfer</Item>
          </Group>

          <Group $w={41} $pl={7}>
            <Item $gap={2}>{I.barrel}<Caret /></Item>
            <Item $gap={2}>{I.disk}<Caret /></Item>
            <Item $gap={2}>{I.slash}<Caret /></Item>
          </Group>

          <Group $w={48} $pl={8}>
            <Item $gap={4}>{I.axes}<Caret /></Item>
            <Item $gap={4}>{I.lift}</Item>
            <Item $gap={4}>{I.blocks}<Caret /></Item>
          </Group>

          <Group $w={105} $pl={6}>
            <Item $gap={2} $ml={3}>{I.measure}Measure<Caret /></Item>
            <Item $on $gap={3} $mr={37} $pad={1}>{I.ruler}Ruler</Item>
            <Item $ml={4}>Units</Item>
          </Group>

          <Group $w={86} $pl={5}>
            <Item $on $gap={2} $mr={25} $pad={2}>{I.grid}Grid</Item>
            <Combo $w={76}>XY<Caret /></Combo>
            <Combo $w={76}>3D<Caret /></Combo>
          </Group>

          <Group $w={65} $pl={6} $end $cols="28px 28px">
            <Cell $on>{I.snapGrid}</Cell>
            <Cell $on>{I.snapEdge}</Cell>
            <Cell $on>{I.snapMid}</Cell>
            <Cell $on>{I.snapCenter}</Cell>
            <Cell $on>{I.snapCorner}</Cell>
            <Cell>{I.snapArc}</Cell>
          </Group>
        </Band>
      </Ribbon>

      <TabBar>
        <span>Model</span>
        <span>Simulation</span>
        <span>Results</span>
        <span>Automation</span>
      </TabBar>

      <Workspace>
        <LeftCol>
          <Pane $h={410} $bg="#fff">
            <PaneHead $h={28}>
              <Pin />
              <X size={16} strokeWidth={1.3} />
            </PaneHead>
            <TreeClip>
              <SelLabel>nt)</SelLabel>
              <ClipText>atic)</ClipText>
            </TreeClip>
          </Pane>
          <Pane $h={277} $bg="#f0f0f0">
            <PaneHead $h={28}>
              <Pin />
              <X size={16} strokeWidth={1.3} />
            </PaneHead>
            <ListBox>
              <TypeHead>Type</TypeHead>
              <TypeRow>Design</TypeRow>
              <TypeRow>Design</TypeRow>
              <HScroll>
                <ChevronRight size={14} strokeWidth={2.6} />
              </HScroll>
            </ListBox>
          </Pane>
        </LeftCol>

        <Mdi>
          <Win $x={24} $y={24} $w={1150} $h={478} $pad={8}>
            <TitleBar $h={34}>
              <TitleText />
              <WinButtons $pr={6}>
                <WinBtn $h={23}><MinGlyph /></WinBtn>
                <WinBtn $h={23}><MaxGlyph /></WinBtn>
                <WinBtn $h={23}><CloseGlyph c="#6d86a0" /></WinBtn>
              </WinButtons>
            </TitleBar>
            <WinBody>
              <TreePane $w={282} />
              <SplitBar $w={2} />
              <Viewport>
                <BackScene />
                <ScaleTick $x={243} $y={416}>0</ScaleTick>
                <ScaleTick $x={415} $y={416}>450</ScaleTick>
                <ScaleTick $x={594} $y={416}>900 (mm)</ScaleTick>
              </Viewport>
            </WinBody>
          </Win>

          <Win $active $x={0} $y={0} $w={1055} $h={475} $pad={7}>
            <TitleBar $h={33} $ml={2}>
              {I.winIcon}
              <TitleText>8transformer - Maxwell3DDesign1 - Modeler</TitleText>
              <WinButtons $pr={7}>
                <WinBtn><MinGlyph /></WinBtn>
                <WinBtn><MaxGlyph /></WinBtn>
                <WinBtn $close><CloseGlyph c="#fff" /></WinBtn>
              </WinButtons>
            </TitleBar>
            <WinBody>
              <TreePane $w={280}>
                {treeItems.map(([label, icon]) => (
                  <TreeRow key={label}>
                    <Expander />
                    <Dots />
                    {icon}
                    <TreeLabel>{label}</TreeLabel>
                  </TreeRow>
                ))}
              </TreePane>
              <SplitBar $w={4} />
              <Viewport>
                <FrontScene />
                <TimeBox>Time = -1</TimeBox>
                <ScaleBar />
                <ScaleTick $x={217} $y={413}>0</ScaleTick>
                <ScaleTick $x={367} $y={413}>400</ScaleTick>
                <ScaleTick $x={523} $y={413}>800 (mm)</ScaleTick>
              </Viewport>
            </WinBody>
          </Win>
        </Mdi>
      </Workspace>

      <BottomRow>
        <DockLeft>
          <Pin />
          <X size={16} strokeWidth={1.3} />
        </DockLeft>
        <DockRight>Progress</DockRight>
      </BottomRow>
    </Page>
  );
}
